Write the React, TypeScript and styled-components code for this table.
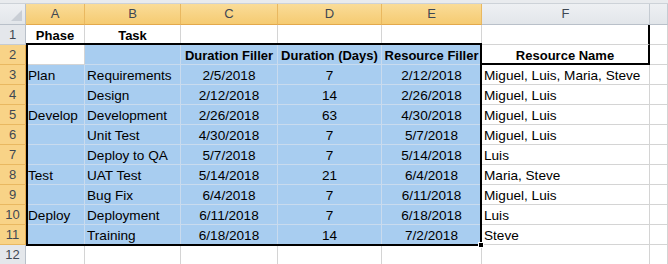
import React from 'react';
import styled, { createGlobalStyle } from 'styled-components';

const GlobalStyle = createGlobalStyle`
  html, body {
    margin: 0;
    padding: 0;
    background: #ffffff;
  }
  body {
    font-family: "Liberation Sans", Arial, sans-serif;
  }
`;

const Sheet = styled.div`
  position: relative;
  width: 668px;
  height: 264px;
  overflow: hidden;
  background: #ffffff;
`;

const TopStrip = styled.div`
  height: 3px;
  background: #e9ebee;
  border-bottom: 1px solid #cdd2d8;
`;

const Grid = styled.div`
  display: grid;
  grid-template-columns: 26px 59px 96px 97px 104px 100px 168px 18px;
  grid-template-rows: 21px repeat(12, 20px);
`;

const Corner = styled.div`
  position: relative;
  box-sizing: border-box;
  background: linear-gradient(#eef0f3, #e2e6ea);
  border-right: 1px solid #b9c0c9;
  border-bottom: 1px solid #b9c0c9;

  &::after {
    content: '';
    position: absolute;
    right: 3px;
    bottom: 3px;
    width: 0;
    height: 0;
    border-left: 11px solid transparent;
    border-bottom: 11px solid #c9ced5;
  }
`;

const ColHeader = styled.div<{ $selected?: boolean }>`
  box-sizing: border-box;
  font-size: 13px;
  line-height: 20px;
  text-align: center;
  color: #3e4753;
  background: ${({ $selected }) =>
    $selected ? 'linear-gradient(#fadc98, #f5cb72)' : 'linear-gradient(#eef0f3, #e2e6ea)'};
  border-right: 1px solid ${({ $selected }) => ($selected ? '#e9b860' : '#c5cbd2')};
  border-bottom: 1px solid ${({ $selected }) => ($selected ? '#e3a94c' : '#b9c0c9')};
`;

const RowHeader = styled.div<{ $selected?: boolean }>`
  box-sizing: border-box;
  font-size: 13px;
  line-height: 19px;
  text-align: center;
  color: #3e4753;
  background: ${({ $selected }) => ($selected ? '#f8d387' : '#e4e7eb')};
  border-right: 1px solid ${({ $selected }) => ($selected ? '#e3a94c' : '#b9c0c9')};
  border-bottom: 1px solid ${({ $selected }) => ($selected ? '#e9b860' : '#c5cbd2')};
`;

type Align = 'left' | 'center';

const Cell = styled.div<{
  $selected?: boolean;
  $align?: Align;
  $bold?: boolean;
  $boxRight?: boolean;
  $boxBottom?: boolean;
}>`
  box-sizing: border-box;
  overflow: hidden;
  white-space: nowrap;
  padding: 2px 2px 0;
  font-size: ${({ $bold }) => ($bold ? '13px' : '13.6px')};
  font-weight: ${({ $bold }) => ($bold ? 700 : 400)};
  line-height: 17px;
  color: #000000;
  text-align: ${({ $align }) => $align ?? 'left'};
  background: ${({ $selected }) => ($selected ? '#a8cdf0' : '#ffffff')};
  border-right: ${({ $boxRight, $selected }) =>
    $boxRight ? '2px solid #000000' : `1px solid ${$selected ? '#c9dbee' : '#d4d4d4'}`};
  border-bottom: ${({ $boxBottom, $selected }) =>
    $boxBottom ? '2px solid #000000' : `1px solid ${$selected ? '#c9dbee' : '#d4d4d4'}`};
`;

// selection outline over A2:E11
const Selection = styled.div`
  position: absolute;
  left: 26px;
  top: 43px;
  width: 456px;
  height: 203px;
  box-sizing: border-box;
  border: 2px solid #000000;
  pointer-events: none;
`;

const FillHandle = styled.div`
  position: absolute;
  left: 479px;
  top: 243px;
  width: 4px;
  height: 4px;
  background: #000000;
  box-shadow: 0 0 0 1px #ffffff;
`;

const columns = ['A', 'B', 'C', 'D', 'E', 'F', ''];
const aligns: Align[] = ['left', 'left', 'center', 'center', 'center', 'left', 'left'];

const rows: string[][] = [
  ['Phase', 'Task', '', '', '', '', ''],
  ['', '', 'Duration Filler', 'Duration (Days)', 'Resource Filler', 'Resource Name', ''],
  ['Plan', 'Requirements', '2/5/2018', '7', '2/12/2018', 'Miguel, Luis, Maria, Steve', ''],
  ['', 'Design', '2/12/2018', '14', '2/26/2018', 'Miguel, Luis', ''],
  ['Develop', 'Development', '2/26/2018', '63', '4/30/2018', 'Miguel, Luis', ''],
  ['', 'Unit Test', '4/30/2018', '7', '5/7/2018', 'Miguel, Luis', ''],
  ['', 'Deploy to QA', '5/7/2018', '7', '5/14/2018', 'Luis', ''],
  ['Test', 'UAT Test', '5/14/2018', '21', '6/4/2018', 'Maria, Steve', ''],
  ['', 'Bug Fix', '6/4/2018', '7', '6/11/2018', 'Miguel, Luis', ''],
  ['Deploy', 'Deployment', '6/11/2018', '7', '6/18/2018', 'Luis', ''],
  ['', 'Training', '6/18/2018', '14', '7/2/2018', 'Steve', ''],
  ['', '', '', '', '', '', ''],
];

const App = () => {
  return (
    <>
      <GlobalStyle />
      <Sheet>
        <TopStrip />
        <Grid>
          <Corner />
          {columns.map((c, i) => (
            <ColHeader key={`h${i}`} $selected={i < 5}>
              {c}
            </ColHeader>
          ))}
          {rows.map((row, r) => {
            const rowNo = r + 1;
            const rowSelected = rowNo >= 2 && rowNo <= 11;
            return (
              <React.Fragment key={rowNo}>
                <RowHeader $selected={rowSelected}>{rowNo}</RowHeader>
                {row.map((value, c) => {
                  const isActive = rowNo === 2 && c === 0;
                  const selected = rowSelected && c < 5 && !isActive;
                  const headerRow = rowNo <= 2;
                  const isBoxed = c === 5 && rowNo <= 2;
                  return (
                    <Cell
                      key={c}
                      $selected={selected}
                      $align={headerRow ? 'center' : aligns[c]}
                      $bold={headerRow}
                      $boxRight={isBoxed}
                      $boxBottom={isBoxed && rowNo === 2}
                    >
                      {value}
                    </Cell>
                  );
                })}
              </React.Fragment>
            );
          })}
        </Grid>
        <Selection />
        <FillHandle />
      </Sheet>
    </>
  );
};

export default App;
